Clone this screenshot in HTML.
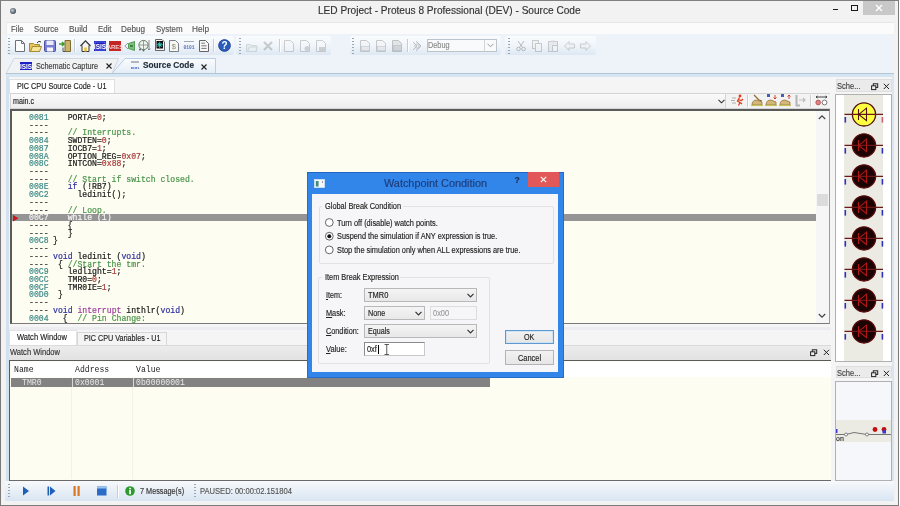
<!DOCTYPE html>
<html><head><meta charset="utf-8">
<style>
*{margin:0;padding:0;box-sizing:border-box}
html,body{width:900px;height:506px;overflow:hidden;background:#ffffff;font-family:"Liberation Sans",sans-serif}
.a{position:absolute}
.t{position:absolute;white-space:pre;line-height:1;-webkit-text-stroke:0.15px currentColor}
.m{position:absolute;white-space:pre;line-height:1;font-family:"Liberation Mono",monospace;font-size:8.15px}
svg{position:absolute;overflow:visible}
.menu{font-size:8.6px;color:#555;top:24.8px}
.grip{position:absolute;width:2px;background:repeating-linear-gradient(#9aa6b4 0 1px,transparent 1px 3px)}
.sep{position:absolute;width:1px;background:#c5cdd6;box-shadow:1px 0 #fff}
.tb{position:absolute;top:35.5px;height:19.5px;background:linear-gradient(#fafcfe,#f0f5fa 50%,#dde8f3);border-radius:2px}
</style></head><body><div style="position:absolute;left:0;top:0;width:900px;height:506px;will-change:transform">
<!-- window frame -->
<div class="a" style="left:0;top:0;width:899px;height:506px;background:#f2f2f2;border:1px solid #7a7a7a;border-top-color:#808080"></div>
<!-- app icon -->
<div class="a" style="left:9.5px;top:7.5px;width:6px;height:6px;border-radius:50%;background:radial-gradient(circle at 40% 40%,#c8ccd4,#3a4452 75%)"></div>
<div class="t" id="title" style="left:318px;top:6.2px;font-size:10.1px;color:#333">LED Project - Proteus 8 Professional (DEV) - Source Code</div>
<!-- window buttons -->
<div class="a" style="left:832.5px;top:9px;width:5.8px;height:1.4px;background:#1a1a1a"></div>
<div class="a" style="left:851px;top:5px;width:7px;height:6px;border:0.9px solid #1a1a1a;border-top-width:1.4px"></div>
<div class="a" style="left:863px;top:1px;width:32px;height:14px;background:#c8c8c8"></div>
<svg style="left:875px;top:4px" width="8" height="8"><path d="M1 1L7 7M7 1L1 7" stroke="#fff" stroke-width="1.4"/></svg>

<!-- menu/toolbar panel -->
<div class="a" style="left:5.5px;top:21.5px;width:888.5px;height:13px;background:#fbfbfb;border-top:1px solid #e6e6e6;border-left:1px solid #ececec"></div>
<div class="a" style="left:5.5px;top:34px;width:888.5px;height:39px;background:#eef3fa"></div>
<div class="t menu" id="fFile0" style="transform:scaleX(0.9019);transform-origin:0 0;left:10.5px">File</div>
<div class="t menu" id="fSource0" style="transform:scaleX(0.8996);transform-origin:0 0;left:33.5px">Source</div>
<div class="t menu" id="fBuild0" style="transform:scaleX(0.9681);transform-origin:0 0;left:68.5px">Build</div>
<div class="t menu" id="fEdit0" style="transform:scaleX(0.9114);transform-origin:0 0;left:97.5px">Edit</div>
<div class="t menu" id="fDebug0" style="transform:scaleX(0.9476);transform-origin:0 0;left:121px">Debug</div>
<div class="t menu" id="fSystem0" style="transform:scaleX(0.9248);transform-origin:0 0;left:155.5px">System</div>
<div class="t menu" id="fHelp0" style="transform:scaleX(0.9611);transform-origin:0 0;left:192px">Help</div>
<!-- toolbars -->
<div class="tb" style="left:7px;width:227px"></div>
<div class="tb" style="left:236px;width:95px"></div>
<div class="tb" style="left:350px;width:151px"></div>
<div class="tb" style="left:505px;width:91px"></div>
<div class="grip" style="left:8px;top:38px;height:16px"></div>
<div class="grip" style="left:239px;top:38px;height:16px"></div>
<div class="grip" style="left:352px;top:38px;height:16px"></div>
<div class="grip" style="left:508px;top:38px;height:16px"></div>
<div class="sep" style="left:74px;top:39px;height:13px"></div>
<div class="sep" style="left:213px;top:39px;height:13px"></div>
<div class="sep" style="left:279px;top:39px;height:13px"></div>
<div class="sep" style="left:407px;top:39px;height:13px"></div>
<!-- TB1 icons -->
<svg style="left:15px;top:40px" width="10" height="12"><path d="M0.5 0.5H6.5L9.5 3.5V11.5H0.5Z" fill="#fdfdfd" stroke="#6d7178"/><path d="M6.5 0.5V3.5H9.5" fill="none" stroke="#6d7178"/></svg>
<svg style="left:29px;top:40px" width="13" height="12"><path d="M0.5 3.5H4.5L5.5 4.5H10.5V11.5H0.5Z" fill="#e6c65c" stroke="#a58a2e"/><path d="M1.5 11.5L3.5 6.5H12.5L10.5 11.5Z" fill="#f6e49a" stroke="#a58a2e"/><path d="M8 3Q10 0 12 2" fill="none" stroke="#333" stroke-width="1"/></svg>
<svg style="left:44px;top:40px" width="12" height="12"><rect x="0.5" y="0.5" width="11" height="11" rx="1" fill="#7a7fd6" stroke="#4b4f9c"/><rect x="2.5" y="0.5" width="7" height="4.5" fill="#e9ecf8"/><rect x="3" y="7.5" width="6" height="4" fill="#f5f5fa"/></svg>
<svg style="left:59px;top:40px" width="12" height="12"><path d="M6 0.5H11.5V11.5H6Z" fill="#c9b46a" stroke="#7e6a2a"/><path d="M0 4H5M3 2L5 4L3 6" fill="none" stroke="#3f9a2e" stroke-width="1.5"/><path d="M4 7.5V11.5H6" fill="none" stroke="#555"/></svg>
<svg style="left:80px;top:40px" width="11" height="12"><path d="M0.5 6L5.5 0.8L10.5 6" fill="none" stroke="#333" stroke-width="1.2"/><path d="M2 5.5V11.5H9V5.5" fill="#fbf6e6" stroke="#333"/><rect x="4.2" y="7.5" width="2.6" height="4" fill="#e7c547"/></svg>
<svg style="left:94px;top:41px" width="12" height="10"><rect x="0" y="0" width="12" height="10" fill="#1d1fc0"/><rect x="1" y="1" width="10" height="8" fill="none" stroke="#8fa0ff" stroke-width="0.5"/><text x="6" y="7.6" font-size="6.5" font-family="Liberation Sans" font-weight="bold" fill="#fff" text-anchor="middle">ISIS</text></svg>
<svg style="left:109px;top:41px" width="12" height="10"><rect x="0" y="0" width="12" height="10" fill="#c42525"/><text x="6" y="7.6" font-size="6" font-family="Liberation Sans" font-weight="bold" fill="#f6d0d0" text-anchor="middle">ARES</text></svg>
<svg style="left:124px;top:40px" width="11" height="12"><path d="M4 3L0.8 6L4 9" fill="none" stroke="#8a9098" stroke-width="0.9"/><path d="M4.5 3.5L10.5 1.5V10.5L4.5 8.5Z" fill="#7cc07c" stroke="#3f8f3f" stroke-width="0.8"/><rect x="6" y="5.2" width="2.8" height="1.6" fill="#2f6f2f"/></svg>
<svg style="left:138px;top:39px" width="13" height="13"><circle cx="5.5" cy="6" r="4.6" fill="#eef4ee" stroke="#6a7a6a" stroke-width="1"/><path d="M5.5 1.5V10.5M1 6H10" stroke="#7a8a7a" stroke-width="0.8"/><circle cx="2" cy="10.5" r="1" fill="#5a6a5a"/><circle cx="5.5" cy="11.5" r="1" fill="#5a6a5a"/><path d="M11 1V11M9.8 9.5L11 11L12.2 9.5" stroke="#6a7a6a" stroke-width="0.8" fill="none"/></svg>
<svg style="left:155px;top:39px" width="10" height="12"><path d="M0.5 0.5H7L9.5 3V11.5H0.5Z" fill="#f4f4f4" stroke="#555" stroke-width="0.9"/><rect x="1.5" y="2" width="6.5" height="7.5" fill="#0a0a0a"/><path d="M4.7 2.8V8.8M1.8 5.8H7.7M2.7 3.8L6.7 7.8M6.7 3.8L2.7 7.8" stroke="#38e0d8" stroke-width="0.9"/></svg>
<svg style="left:169px;top:40px" width="10" height="12"><path d="M0.5 0.5H6.5L9.5 3.5V11.5H0.5Z" fill="#f7f7f4" stroke="#6d7178" stroke-width="0.9"/><text x="4.8" y="9.2" font-size="7.5" font-family="Liberation Sans" fill="#8a8a70" text-anchor="middle">$</text></svg>
<svg style="left:183px;top:40px" width="12" height="12"><rect x="1" y="1" width="10" height="0.9" fill="#9aa0a8"/><text x="6" y="9" font-size="4.6" font-family="Liberation Mono" font-weight="bold" fill="#5a70c0" text-anchor="middle">0101</text></svg>
<svg style="left:199px;top:40px" width="10" height="12"><path d="M0.5 0.5H6.5L9.5 3.5V11.5H0.5Z" fill="#f7f7f7" stroke="#555" stroke-width="0.9"/><path d="M2.3 3.2H6M2.3 5.8H7.6M2.3 8.4H7.6" stroke="#555" stroke-width="0.8"/></svg>
<svg style="left:218px;top:39px" width="13" height="13"><circle cx="6.5" cy="6.5" r="5.9" fill="#2a5cba" stroke="#1c3f8c" stroke-width="0.8"/><text x="6.6" y="10.4" font-size="10" font-family="Liberation Sans" font-weight="bold" fill="#fff" text-anchor="middle">?</text></svg>
<!-- TB2 disabled -->
<svg style="left:246px;top:41px" width="12" height="11" opacity="0.38"><path d="M0.5 3.5H4.5L5.5 4.5H10.5V10.5H0.5Z" fill="#ddd" stroke="#9aa"/><path d="M1.5 10.5L3.5 6H11.5L9.5 10.5Z" fill="#eee" stroke="#9aa"/></svg>
<svg style="left:263px;top:41px" width="10" height="10" opacity="0.4"><path d="M1 1L9 9M9 1L1 9" stroke="#8a8a8a" stroke-width="2.2"/></svg>
<svg style="left:284px;top:40px" width="10" height="12" opacity="0.38"><path d="M0.5 0.5H6.5L9.5 3.5V11.5H0.5Z" fill="#fafafa" stroke="#888"/></svg>
<svg style="left:300px;top:40px" width="11" height="12" opacity="0.38"><path d="M0.5 0.5H6.5L9.5 3.5V11.5H0.5Z" fill="#fafafa" stroke="#888"/><circle cx="7" cy="8.5" r="2.5" fill="#999"/></svg>
<svg style="left:316px;top:40px" width="11" height="12" opacity="0.38"><path d="M0.5 0.5H6.5L9.5 3.5V11.5H0.5Z" fill="#fafafa" stroke="#888"/><rect x="3" y="7" width="7" height="4" fill="#999"/></svg>
<!-- TB3 -->
<svg style="left:360px;top:40px" width="11" height="12" opacity="0.42"><path d="M0.5 0.5H6.5L9.5 3.5V11.5H0.5Z" fill="#f4f4f4" stroke="#888"/><rect x="1.5" y="6.5" width="8" height="4" fill="#ddd" stroke="#888" stroke-width="0.6"/></svg>
<svg style="left:376px;top:40px" width="11" height="12" opacity="0.42"><path d="M0.5 0.5H6.5L9.5 3.5V11.5H0.5Z" fill="#f4f4f4" stroke="#888"/><rect x="1.5" y="6.5" width="8" height="4" fill="#ddd" stroke="#888" stroke-width="0.6"/></svg>
<svg style="left:392px;top:40px" width="11" height="12" opacity="0.42"><path d="M0.5 0.5H6.5L9.5 3.5V11.5H0.5Z" fill="#ccc" stroke="#777"/><rect x="1.5" y="5.5" width="8" height="5" fill="#aaa" stroke="#777" stroke-width="0.6"/></svg>
<svg style="left:412px;top:40px" width="11" height="12" opacity="0.42"><path d="M1 2L5 6L1 10M4 1L9 6L4 11" fill="none" stroke="#777" stroke-width="1"/><circle cx="5" cy="6" r="2.2" fill="none" stroke="#777"/></svg>
<div class="a" style="left:427px;top:38.5px;width:70px;height:13px;background:#f9fafb;border:1px solid #bcc3ca"></div>
<div class="a" style="left:484px;top:39.5px;width:1px;height:11px;background:#d5d5d5"></div>
<svg style="left:487px;top:43px" width="7" height="5"><path d="M0.5 0.8L3.5 3.8L6.5 0.8" fill="none" stroke="#999" stroke-width="1"/></svg>
<div class="t" id="fDebugcombo1" style="transform:scaleX(0.8792);transform-origin:0 0;left:427.5px;top:41px;font-size:8.3px;color:#8a8a8a">Debug</div>
<!-- TB4 -->
<svg style="left:516px;top:40px" width="11" height="12" opacity="0.42"><circle cx="2.5" cy="9" r="1.8" fill="none" stroke="#666"/><circle cx="7.5" cy="9" r="1.8" fill="none" stroke="#666"/><path d="M3.5 7.5L8 1M6.5 7.5L2 1" stroke="#666"/></svg>
<svg style="left:532px;top:40px" width="11" height="12" opacity="0.4"><rect x="0.5" y="0.5" width="6" height="8" fill="#eee" stroke="#888"/><rect x="3.5" y="3.5" width="6" height="8" fill="#f4f4f4" stroke="#888"/></svg>
<svg style="left:548px;top:40px" width="11" height="12" opacity="0.4"><rect x="0.5" y="1.5" width="9" height="10" fill="#ddd" stroke="#888"/><rect x="3" y="0.5" width="4" height="2" fill="#aaa"/><rect x="4.5" y="5.5" width="5" height="6" fill="#f4f4f4" stroke="#888"/></svg>
<svg style="left:564px;top:40px" width="11" height="12" opacity="0.38"><path d="M0.5 6L5 1.5V4H10.5V8H5V10.5Z" fill="#eee" stroke="#888"/></svg>
<svg style="left:580px;top:40px" width="11" height="12" opacity="0.38"><path d="M10.5 6L6 1.5V4H0.5V8H6V10.5Z" fill="#eee" stroke="#888"/></svg>
<!-- doc tab strip -->

<svg style="left:5px;top:57px" width="220" height="18">
 <path d="M1 16.5L9 1.5H113.5L107 16.5Z" fill="#f1f2f4" stroke="#d2d8de" stroke-width="1"/>
 <path d="M107 16.5L120 1.5H210.5V16.5Z" fill="url(#g1)" stroke="#b9cfe6" stroke-width="1"/>
 <defs><linearGradient id="g1" x1="0" y1="0" x2="0" y2="1"><stop offset="0" stop-color="#fbfcfe"/><stop offset="1" stop-color="#e3edf7"/></linearGradient></defs>
</svg>
<div class="a" style="left:5.5px;top:72.5px;width:888.5px;height:4.5px;background:#d6e5f2;border-top:1px solid #b2c6d8"></div>
<svg style="left:19.5px;top:62px" width="12" height="8"><rect width="12" height="8" fill="#1b1fc4"/><text x="6" y="6.6" font-size="6.4" font-family="Liberation Sans" font-weight="bold" fill="#fff" text-anchor="middle">ISIS</text></svg>
<div class="t" id="fSchematicCapture0" style="transform:scaleX(0.8482);transform-origin:0 0;left:36px;top:61.5px;font-size:8.6px;color:#3c3c3c">Schematic Capture</div>
<svg style="left:106px;top:63px" width="6" height="6"><path d="M0.5 0.5L5.5 5.5M5.5 0.5L0.5 5.5" stroke="#222" stroke-width="1.1"/></svg>
<svg style="left:130px;top:61px" width="10" height="9"><rect x="1" y="0.5" width="8" height="1" fill="#6c7480"/><text x="5" y="7.5" font-size="3.6" font-family="Liberation Mono" font-weight="bold" fill="#3a55b5" text-anchor="middle">0101</text></svg>
<div class="t" id="fSourceCode0" style="transform:scaleX(0.9398);transform-origin:0 0;left:143px;top:61px;font-size:8.8px;color:#1e2a36;font-weight:bold">Source Code</div>
<svg style="left:201px;top:63.5px" width="6" height="6"><path d="M0.5 0.5L5.5 5.5M5.5 0.5L0.5 5.5" stroke="#222" stroke-width="1.1"/></svg>

<!-- source pane -->
<div class="a" style="left:5px;top:77px;width:829px;height:250px;background:#f5f5f5"></div>
<div class="a" style="left:8.5px;top:78.5px;width:106px;height:15px;background:#fff;border:1px solid #e0e0e0;border-bottom:none"></div>
<div class="t" id="fPICCPUSourceCodeU10" style="transform:scaleX(0.8742);transform-origin:0 0;left:16.5px;top:81.5px;font-size:8.3px;color:#222">PIC CPU Source Code - U1</div>
<div class="a" style="left:10px;top:93px;width:716px;height:16px;background:linear-gradient(#fafafa,#ededed);border:1px solid #d4d4d4"></div>
<div class="t" id="fmainc0" style="transform:scaleX(0.8593);transform-origin:0 0;left:13px;top:97px;font-size:8.3px;color:#222">main.c</div>
<svg style="left:718px;top:99px" width="7" height="5"><path d="M0.5 0.8L3.5 3.8L6.5 0.8" fill="none" stroke="#333" stroke-width="1.1"/></svg>
<div class="a" style="left:726px;top:93px;width:104px;height:16px;background:#f3f3f3;border-top:1px solid #d4d4d4;border-bottom:1px solid #d4d4d4"></div>
<!-- pane icons -->
<svg style="left:731px;top:94px" width="13" height="12"><path d="M1 4H5M0 6.5H4M1 9H5" stroke="#999" stroke-width="0.8"/><circle cx="9" cy="2" r="1.4" fill="#e23a1a"/><path d="M8.5 3.5L6.5 7L9 8.5L7.5 11.5M7 5.5L10.5 6.5L12 5M8.5 8L11 10" stroke="#e23a1a" stroke-width="1.3" fill="none"/></svg>
<div class="sep" style="left:747px;top:95px;height:12px;background:#ccc"></div>
<svg style="left:751px;top:94px" width="13" height="12"><path d="M3 1L8 6L11 7" stroke="#8a6a30" stroke-width="1.2" fill="none"/><path d="M1 11Q1 6 6 6L11 8V11Z" fill="#d5b77a" stroke="#8a6a30" stroke-width="0.7"/><path d="M0 11.5H12" stroke="#c8c45a" stroke-width="1.2"/></svg>
<svg style="left:765px;top:94px" width="13" height="12"><rect x="2" y="0" width="3" height="3" fill="#4a5ab0"/><path d="M1 11Q1 6 6 6L11 8V11Z" fill="#d5b77a" stroke="#8a6a30" stroke-width="0.7"/><path d="M0 11.5H12" stroke="#c8c45a" stroke-width="1.2"/><path d="M10 1V5M8.5 3.5L10 5L11.5 3.5" stroke="#d03020" stroke-width="0.9" fill="none"/></svg>
<svg style="left:779px;top:94px" width="13" height="12"><rect x="2" y="0" width="3" height="3" fill="#4a5ab0"/><path d="M1 11Q1 6 6 6L11 8V11Z" fill="#d5b77a" stroke="#8a6a30" stroke-width="0.7"/><path d="M0 11.5H12" stroke="#c8c45a" stroke-width="1.2"/><path d="M10 5V1M8.5 2.5L10 1L11.5 2.5" stroke="#d03020" stroke-width="0.9" fill="none"/></svg>
<svg style="left:795px;top:94px" width="12" height="12" opacity="0.5"><path d="M1.5 1V11.5H5" stroke="#777" stroke-width="2" fill="none"/><path d="M4 6H10M8 4L10 6L8 8" stroke="#888" stroke-width="1.2" fill="none"/></svg>
<div class="sep" style="left:810px;top:95px;height:12px;background:#ccc"></div>
<svg style="left:815px;top:95px" width="13" height="11"><path d="M1 2H12M1 2L2.5 1M12 2L10.5 1M1 2L2.5 3M12 2L10.5 3" stroke="#333" stroke-width="0.9"/><circle cx="3.2" cy="7.5" r="2.4" fill="#e08080" stroke="#a03030" stroke-width="0.6"/><circle cx="9.5" cy="7.5" r="2.4" fill="#fff" stroke="#444" stroke-width="0.7"/></svg>
<!-- editor -->
<style>.m2{position:absolute;white-space:pre;line-height:1;font-family:"Liberation Mono",monospace;font-size:16.3px;color:#1a1a1a;-webkit-text-stroke:0.4px currentColor}.ca{color:#3d8a8a}.cd{color:#3a3a3a}.cn{color:#a83a3a}.cc{color:#4a944a}.ck{color:#3030a0}.cp{color:#a040a0}</style>
<div class="a" style="left:10px;top:109px;width:820px;height:215px;background:#fdfdf1;border-left:2px solid #5a5a5a;border-top:2px solid #5a5a5a;border-right:1px solid #9a9a9a;border-bottom:1px solid #7a7a7a"></div>
<div class="a" style="left:12px;top:214.19px;width:803.5px;height:7px;background:#959595"></div>
<svg style="left:13px;top:214.90px" width="6" height="7"><path d="M0 0L5.5 3.3L0 6.6Z" fill="#c81818"/></svg>
<div class="a" style="left:0;top:100px;width:1800px;height:600px;transform:scale(0.5);transform-origin:0 0"><div class="m2 ca" style="left:58.00px;top:27.60px">0081</div>
<div class="m2" style="left:106.00px;top:27.60px">   PORTA=<span class="cn">0</span>;</div>
<div class="m2 cd" style="left:58.00px;top:43.03px">----</div>
<div class="m2 cd" style="left:58.00px;top:58.46px">----</div>
<div class="m2" style="left:106.00px;top:58.46px">   <span class="cc">// Interrupts.</span></div>
<div class="m2 ca" style="left:58.00px;top:73.89px">0084</div>
<div class="m2" style="left:106.00px;top:73.89px">   SWDTEN=<span class="cn">0</span>;</div>
<div class="m2 ca" style="left:58.00px;top:89.32px">0087</div>
<div class="m2" style="left:106.00px;top:89.32px">   IOCB7=<span class="cn">1</span>;</div>
<div class="m2 ca" style="left:58.00px;top:104.75px">008A</div>
<div class="m2" style="left:106.00px;top:104.75px">   OPTION_REG=<span class="cn">0x07</span>;</div>
<div class="m2 ca" style="left:58.00px;top:120.18px">008C</div>
<div class="m2" style="left:106.00px;top:120.18px">   INTCON=<span class="cn">0x88</span>;</div>
<div class="m2 cd" style="left:58.00px;top:135.61px">----</div>
<div class="m2 cd" style="left:58.00px;top:151.04px">----</div>
<div class="m2" style="left:106.00px;top:151.04px">   <span class="cc">// Start if switch closed.</span></div>
<div class="m2 ca" style="left:58.00px;top:166.47px">008E</div>
<div class="m2" style="left:106.00px;top:166.47px">   <span class="ck">if</span> (!RB7)</div>
<div class="m2 ca" style="left:58.00px;top:181.90px">00C2</div>
<div class="m2" style="left:106.00px;top:181.90px">     ledinit();</div>
<div class="m2 cd" style="left:58.00px;top:197.33px">----</div>
<div class="m2 cd" style="left:58.00px;top:212.76px">----</div>
<div class="m2" style="left:106.00px;top:212.76px">   <span class="cc">// Loop.</span></div>
<div class="m2" style="left:58.00px;top:228.19px;color:#f0f0f0">00C7</div>
<div class="m2" style="left:106.00px;top:228.19px;color:#f4f4f4">   while (1)</div>
<div class="m2 cd" style="left:58.00px;top:243.62px">----</div>
<div class="m2" style="left:106.00px;top:243.62px">   {</div>
<div class="m2 cd" style="left:58.00px;top:259.05px">----</div>
<div class="m2" style="left:106.00px;top:259.05px">   }</div>
<div class="m2 ca" style="left:58.00px;top:274.48px">00C8</div>
<div class="m2" style="left:106.00px;top:274.48px">}</div>
<div class="m2 cd" style="left:58.00px;top:289.91px">----</div>
<div class="m2 cd" style="left:58.00px;top:305.34px">----</div>
<div class="m2" style="left:106.00px;top:305.34px"><span class="ck">void</span> ledinit (<span class="ck">void</span>)</div>
<div class="m2 cd" style="left:58.00px;top:320.77px">----</div>
<div class="m2" style="left:106.00px;top:320.77px"> { <span class="cc">//Start the tmr.</span></div>
<div class="m2 ca" style="left:58.00px;top:336.20px">00C9</div>
<div class="m2" style="left:106.00px;top:336.20px">   ledlight=<span class="cn">1</span>;</div>
<div class="m2 ca" style="left:58.00px;top:351.63px">00CC</div>
<div class="m2" style="left:106.00px;top:351.63px">   TMR0=<span class="cn">0</span>;</div>
<div class="m2 ca" style="left:58.00px;top:367.06px">00CF</div>
<div class="m2" style="left:106.00px;top:367.06px">   TMR0IE=<span class="cn">1</span>;</div>
<div class="m2 ca" style="left:58.00px;top:382.49px">00D0</div>
<div class="m2" style="left:106.00px;top:382.49px"> }</div>
<div class="m2 cd" style="left:58.00px;top:397.92px">----</div>
<div class="m2 cd" style="left:58.00px;top:413.35px">----</div>
<div class="m2" style="left:106.00px;top:413.35px"><span class="ck">void</span> <span class="cp">interrupt</span> inthlr(<span class="ck">void</span>)</div>
<div class="m2 ca" style="left:58.00px;top:428.78px">0004</div>
<div class="m2" style="left:106.00px;top:428.78px">  {  <span class="cc">// Pin Change:</span></div></div>
<!-- editor scrollbar -->
<div class="a" style="left:816px;top:111px;width:13px;height:212px;background:#f6f6f6"></div>
<svg style="left:818px;top:115px" width="8" height="5"><path d="M0.8 4L4 0.8L7.2 4" fill="none" stroke="#444" stroke-width="1.2"/></svg>
<svg style="left:818px;top:313px" width="8" height="5"><path d="M0.8 1L4 4.2L7.2 1" fill="none" stroke="#444" stroke-width="1.2"/></svg>
<div class="a" style="left:816.5px;top:194px;width:11px;height:12px;background:#dcdcdc"></div>

<!-- splitter -->
<div class="a" style="left:8px;top:326.5px;width:826px;height:3px;background:#ebedf0"></div>

<!-- watch pane -->
<div class="a" style="left:8px;top:329.5px;width:826px;height:152px;background:#f5f5f5"></div>
<div class="a" style="left:8.5px;top:330px;width:68px;height:15px;background:#fff;border:1px solid #e2e2e2;border-bottom:none"></div>
<div class="t" id="fWatchWindowtab0" style="transform:scaleX(0.9086);transform-origin:0 0;left:17px;top:333px;font-size:8.3px;color:#222">Watch Window</div>
<div class="a" style="left:77px;top:332px;width:90px;height:13px;background:#f4f4f4;border:1px solid #d6d6d6;border-bottom:none"></div>
<div class="t" id="fPICCPUVariablesU10" style="transform:scaleX(0.8690);transform-origin:0 0;left:83.6px;top:334px;font-size:8.3px;color:#222">PIC CPU Variables - U1</div>
<div class="a" style="left:8.5px;top:344.5px;width:824px;height:15.5px;background:linear-gradient(#ececec,#e2e2e2);border-top:1px solid #dadada"></div>
<div class="t" id="fWatchWindowbar1" style="transform:scaleX(0.9086);transform-origin:0 0;left:10px;top:348px;font-size:8.3px;color:#333">Watch Window</div>
<svg style="left:810px;top:348.5px" width="8" height="8"><rect x="2.3" y="0.8" width="4.4" height="3.6" fill="none" stroke="#222" stroke-width="1"/><rect x="0.6" y="2.8" width="4.2" height="3.8" fill="#eee" stroke="#222" stroke-width="1"/></svg>
<svg style="left:823px;top:349px" width="7" height="7"><path d="M0.8 0.8L6 6M6 0.8L0.8 6" stroke="#222" stroke-width="1"/></svg>
<div class="a" style="left:9px;top:360px;width:823px;height:121px;background:#fdfdf1;border-left:1.5px solid #5a5a5a;border-top:1.5px solid #5a5a5a;border-right:1px solid #8a8a8a;border-bottom:1.5px solid #6a6a6a"></div>
<div class="a" style="left:11px;top:362px;width:820px;height:15px;background:#fff"></div>
<div class="m" style="left:14px;top:366px;color:#222">Name</div>
<div class="m" style="left:75px;top:366px;color:#222">Address</div>
<div class="m" style="left:136px;top:366px;color:#222">Value</div>
<div class="a" style="left:71px;top:377px;width:1px;height:102px;background:#f2f2e6"></div>
<div class="a" style="left:132px;top:377px;width:1px;height:102px;background:#f2f2e6"></div>
<div class="a" style="left:11px;top:378px;width:479px;height:9px;background:#828282"></div>
<div class="a" style="left:71.5px;top:378px;width:1px;height:9px;background:#d8d8d8"></div>
<div class="a" style="left:132.5px;top:378px;width:1px;height:9px;background:#d8d8d8"></div>
<div class="m" style="left:22px;top:379px;color:#e8e8e8">TMR0</div>
<div class="m" style="left:75px;top:379px;color:#e8e8e8">0x0001</div>
<div class="m" style="left:136px;top:379px;color:#e8e8e8">0b00000001</div>

<!-- right panels -->
<div class="a" style="left:831px;top:77px;width:63px;height:404px;background:#f5f5f5"></div>
<div class="a" style="left:892px;top:77px;width:2px;height:404px;background:#d9e6f2"></div>
<div class="a" style="left:835.5px;top:79px;width:56px;height:12.5px;background:#ebebeb;border:1px solid #dedede"></div>
<div class="t" id="fSche10" style="transform:scaleX(0.9099);transform-origin:0 0;left:836.5px;top:82px;font-size:8.3px;color:#444">Sche...</div>
<svg style="left:871px;top:82.5px" width="8" height="8"><rect x="2.3" y="0.8" width="4.4" height="3.6" fill="none" stroke="#222" stroke-width="1"/><rect x="0.6" y="2.8" width="4.2" height="3.8" fill="#eee" stroke="#222" stroke-width="1"/></svg>
<svg style="left:883px;top:83px" width="7" height="7"><path d="M0.8 0.8L6 6M6 0.8L0.8 6" stroke="#222" stroke-width="1"/></svg>
<div class="a" style="left:835px;top:93.5px;width:57px;height:268px;background:#fff;border:1px solid #b0b0b0"></div>
<div class="a" style="left:844px;top:94.5px;width:39px;height:266px;background:#ecebe3"></div>
<div class="a" style="left:835.5px;top:366px;width:56px;height:12px;background:#ebebeb;border:1px solid #dedede"></div>
<div class="t" id="fSche21" style="transform:scaleX(0.9099);transform-origin:0 0;left:836.5px;top:369px;font-size:8.3px;color:#444">Sche...</div>
<svg style="left:871px;top:369.5px" width="8" height="8"><rect x="2.3" y="0.8" width="4.4" height="3.6" fill="none" stroke="#222" stroke-width="1"/><rect x="0.6" y="2.8" width="4.2" height="3.8" fill="#eee" stroke="#222" stroke-width="1"/></svg>
<svg style="left:883px;top:370px" width="7" height="7"><path d="M0.8 0.8L6 6M6 0.8L0.8 6" stroke="#222" stroke-width="1"/></svg>
<div class="a" style="left:835px;top:380.5px;width:57px;height:100px;background:#f6f7fa;border:1px solid #b0b0b0"></div>

<svg style="left:844px;top:95px" width="40" height="266">
<circle cx="20" cy="19.4" r="11.6" fill="#ffff40" stroke="#501010" stroke-width="1.3"/>
<path d="M0.5 19.4H39" stroke="#6a1818" stroke-width="1.2"/>
<path d="M14.5 13.9V24.9M22.5 13.1L14.8 19.4L22.5 25.7Z" fill="none" stroke="#501010" stroke-width="1.1"/>
<rect x="0.5" y="22.0" width="1.6" height="5.6" fill="#3030c0"/>
<rect x="37.6" y="22.0" width="1.6" height="5.6" fill="#d06070"/>
<circle cx="20" cy="50.4" r="11.6" fill="#1c0303" stroke="#5a0a0a" stroke-width="1.3"/>
<path d="M0.5 50.4H39" stroke="#6a1818" stroke-width="1.2"/>
<path d="M14.5 44.9V55.9M22.5 44.1L14.8 50.4L22.5 56.7Z" fill="none" stroke="#b01818" stroke-width="1.1"/>
<rect x="0.5" y="53.0" width="1.6" height="5.6" fill="#3030c0"/>
<rect x="37.6" y="53.0" width="1.6" height="5.6" fill="#3030c0"/>
<circle cx="20" cy="81.4" r="11.6" fill="#1c0303" stroke="#5a0a0a" stroke-width="1.3"/>
<path d="M0.5 81.4H39" stroke="#6a1818" stroke-width="1.2"/>
<path d="M14.5 75.9V86.9M22.5 75.1L14.8 81.4L22.5 87.7Z" fill="none" stroke="#b01818" stroke-width="1.1"/>
<rect x="0.5" y="84.0" width="1.6" height="5.6" fill="#3030c0"/>
<rect x="37.6" y="84.0" width="1.6" height="5.6" fill="#3030c0"/>
<circle cx="20" cy="112.4" r="11.6" fill="#1c0303" stroke="#5a0a0a" stroke-width="1.3"/>
<path d="M0.5 112.4H39" stroke="#6a1818" stroke-width="1.2"/>
<path d="M14.5 106.9V117.9M22.5 106.1L14.8 112.4L22.5 118.7Z" fill="none" stroke="#b01818" stroke-width="1.1"/>
<rect x="0.5" y="115.0" width="1.6" height="5.6" fill="#3030c0"/>
<rect x="37.6" y="115.0" width="1.6" height="5.6" fill="#3030c0"/>
<circle cx="20" cy="143.4" r="11.6" fill="#1c0303" stroke="#5a0a0a" stroke-width="1.3"/>
<path d="M0.5 143.4H39" stroke="#6a1818" stroke-width="1.2"/>
<path d="M14.5 137.9V148.9M22.5 137.1L14.8 143.4L22.5 149.7Z" fill="none" stroke="#b01818" stroke-width="1.1"/>
<rect x="0.5" y="146.0" width="1.6" height="5.6" fill="#3030c0"/>
<rect x="37.6" y="146.0" width="1.6" height="5.6" fill="#3030c0"/>
<circle cx="20" cy="174.4" r="11.6" fill="#1c0303" stroke="#5a0a0a" stroke-width="1.3"/>
<path d="M0.5 174.4H39" stroke="#6a1818" stroke-width="1.2"/>
<path d="M14.5 168.9V179.9M22.5 168.1L14.8 174.4L22.5 180.7Z" fill="none" stroke="#b01818" stroke-width="1.1"/>
<rect x="0.5" y="177.0" width="1.6" height="5.6" fill="#3030c0"/>
<rect x="37.6" y="177.0" width="1.6" height="5.6" fill="#3030c0"/>
<circle cx="20" cy="205.4" r="11.6" fill="#1c0303" stroke="#5a0a0a" stroke-width="1.3"/>
<path d="M0.5 205.4H39" stroke="#6a1818" stroke-width="1.2"/>
<path d="M14.5 199.9V210.9M22.5 199.1L14.8 205.4L22.5 211.7Z" fill="none" stroke="#b01818" stroke-width="1.1"/>
<rect x="0.5" y="208.0" width="1.6" height="5.6" fill="#3030c0"/>
<rect x="37.6" y="208.0" width="1.6" height="5.6" fill="#3030c0"/>
<circle cx="20" cy="236.4" r="11.6" fill="#1c0303" stroke="#5a0a0a" stroke-width="1.3"/>
<path d="M0.5 236.4H39" stroke="#6a1818" stroke-width="1.2"/>
<path d="M14.5 230.9V241.9M22.5 230.1L14.8 236.4L22.5 242.7Z" fill="none" stroke="#b01818" stroke-width="1.1"/>
<rect x="0.5" y="239.0" width="1.6" height="5.6" fill="#3030c0"/>
<rect x="37.6" y="239.0" width="1.6" height="5.6" fill="#3030c0"/>
</svg>

<!-- panel 2 schematic snippet -->
<div class="a" style="left:836px;top:419.5px;width:55px;height:22.5px;background:#ecebe3"></div>
<svg style="left:836px;top:422px" width="55" height="25">
<path d="M0 12.5H10L18 10.5L31 12.5H55" fill="none" stroke="#555" stroke-width="0.8"/>
<circle cx="10" cy="12.5" r="1.5" fill="#fff" stroke="#555" stroke-width="0.7"/>
<circle cx="31" cy="12.5" r="1.5" fill="#fff" stroke="#555" stroke-width="0.7"/>
<circle cx="39" cy="7.5" r="2.4" fill="#c01010"/><circle cx="48" cy="7.5" r="2.4" fill="#c01010"/>
<rect x="46.5" y="8" width="3.5" height="3.5" fill="#3a3ad0"/>
<rect x="0" y="7" width="1.5" height="4" fill="#3a3ad0"/>
</svg>
<div class="t" style="left:836px;top:435px;font-size:7px;color:#333">on</div>

<div class="a" style="left:5.5px;top:77px;width:3px;height:404px;background:#d3e1ee"></div>
<!-- status bar -->
<div class="a" style="left:5px;top:481px;width:889px;height:20px;background:linear-gradient(#f7f9fc,#e8eff7 50%,#d8e5f2)"></div>
<div class="grip" style="left:8px;top:484px;height:15px"></div>
<svg style="left:22px;top:486px" width="8" height="10"><path d="M1 0.5L7 5L1 9.5Z" fill="#1e5fb8"/></svg>
<svg style="left:47px;top:486px" width="9" height="10"><rect x="0.5" y="0.5" width="1.6" height="9" fill="#1e5fb8"/><path d="M3 0.5L8.5 5L3 9.5Z" fill="#1e5fb8"/></svg>
<svg style="left:73px;top:486px" width="8" height="10"><rect x="0.5" y="0" width="2.2" height="10" fill="#d87822"/><rect x="4.5" y="0" width="2.2" height="10" fill="#d87822"/></svg>
<svg style="left:97px;top:486px" width="10" height="10"><rect x="0" y="0.5" width="9.5" height="9" fill="#2a6cc8"/><rect x="0" y="0.5" width="9.5" height="2" fill="#9cc4f0"/></svg>
<div class="sep" style="left:117px;top:485px;height:13px"></div>
<svg style="left:125px;top:485.5px" width="10" height="10"><circle cx="5" cy="5" r="4.8" fill="#2e9a2e"/><rect x="4.2" y="4" width="1.7" height="4.2" fill="#fff"/><rect x="4.2" y="1.8" width="1.7" height="1.5" fill="#fff"/></svg>
<div class="t" id="f7Messages0" style="transform:scaleX(0.8773);transform-origin:0 0;left:139.7px;top:487px;font-size:8.3px;color:#333">7 Message(s)</div>
<div class="grip" style="left:193.5px;top:484px;height:15px"></div>
<div class="t" id="fPAUSED0000021518040" style="transform:scaleX(0.9153);transform-origin:0 0;left:199.6px;top:487px;font-size:8.3px;color:#555">PAUSED: 00:00:02.151804</div>
<!-- dialog -->
<style>.dl{font-size:8.3px;color:#222}.u{text-decoration:underline;text-underline-offset:0.5px;text-decoration-thickness:0.6px}</style>
<div class="a" style="left:306.5px;top:172px;width:257px;height:205.5px;background:#3286ea;border:1px solid #2a6cc4;border-top-color:#2466c0"></div>
<svg style="left:313.5px;top:178.5px" width="11" height="9"><rect x="0.5" y="0.5" width="10" height="8" fill="#f4f8fc" stroke="#d8e4f0" stroke-width="0.8"/><rect x="1.8" y="2" width="2.8" height="5.5" fill="#4a8a7a"/><rect x="8" y="2" width="0.8" height="2" fill="#888"/></svg>
<div class="t" id="fWatchpointCondition0" style="transform:scaleX(1.0564);transform-origin:0 0;left:384px;top:178.8px;font-size:10.3px;color:#1e3c78">Watchpoint Condition</div>
<div class="t" style="left:514.5px;top:175.5px;font-size:8.5px;color:#1e2c4c;font-weight:bold">?</div>
<div class="a" style="left:527.5px;top:172px;width:31px;height:14.5px;background:#e25858"></div>
<svg style="left:539.5px;top:175.5px" width="7" height="7"><path d="M0.8 0.8L6.2 6.2M6.2 0.8L0.8 6.2" stroke="#fff" stroke-width="1.1"/></svg>
<div class="a" style="left:312px;top:194px;width:246px;height:178px;background:#f6f6f8"></div>
<!-- group 1 -->
<div class="a" style="left:318.5px;top:205.5px;width:235px;height:58px;border:1px solid #e2e2e4;border-radius:2px"></div>
<div class="a" style="left:322px;top:201px;width:81px;height:9px;background:#f6f6f8"></div>
<div class="t dl" id="fGlobalBreakCondition0" style="transform:scaleX(0.8907);transform-origin:0 0;left:324.5px;top:202px">Global Break Condition</div>
<svg style="left:325px;top:218px" width="9" height="37">
 <circle cx="4.3" cy="4.5" r="3.9" fill="#fff" stroke="#555" stroke-width="0.9"/>
 <circle cx="4.3" cy="18.2" r="3.9" fill="#fff" stroke="#555" stroke-width="0.9"/>
 <circle cx="4.3" cy="18.2" r="2" fill="#111"/>
 <circle cx="4.3" cy="31.9" r="3.9" fill="#fff" stroke="#555" stroke-width="0.9"/>
</svg>
<div class="t dl" id="fTurnoffdisablewatchpoints0" style="transform:scaleX(0.8922);transform-origin:0 0;left:336.5px;top:218.5px">Turn off (disable) watch points.</div>
<div class="t dl" id="fSuspendthesimulationifANYexpressionistrue0" style="transform:scaleX(0.8846);transform-origin:0 0;left:336.5px;top:232px">Suspend the simulation if ANY expression is true.</div>
<div class="t dl" id="fStopthesimulationonlywhenALLexpressionsaretrue0" style="transform:scaleX(0.8894);transform-origin:0 0;left:336.5px;top:246px">Stop the simulation only when ALL expressions are true.</div>
<!-- group 2 -->
<div class="a" style="left:318px;top:277px;width:172px;height:87px;border:1px solid #e2e2e4;border-radius:2px"></div>
<div class="a" style="left:322px;top:272px;width:78px;height:9px;background:#f6f6f8"></div>
<div class="t dl" id="fItemBreakExpression0" style="transform:scaleX(0.8842);transform-origin:0 0;left:324.5px;top:273px">Item Break Expression</div>
<div class="t dl" id="fItem0" style="transform:scaleX(0.8616);transform-origin:0 0;left:325.5px;top:291px"><span class="u">I</span>tem:</div>
<div class="t dl" id="fMask0" style="transform:scaleX(0.8807);transform-origin:0 0;left:325.5px;top:309px"><span class="u">M</span>ask:</div>
<div class="t dl" id="fCondition0" style="transform:scaleX(0.8776);transform-origin:0 0;left:325.5px;top:327px"><span class="u">C</span>ondition:</div>
<div class="t dl" id="fValue0" style="transform:scaleX(0.9074);transform-origin:0 0;left:325.5px;top:345px"><span class="u">V</span>alue:</div>
<div class="a" style="left:364px;top:288px;width:113px;height:14px;background:linear-gradient(#f4f4f4,#e8e8e8);border:1px solid #b8b8b8"></div>
<div class="t dl" id="fTMR0d0" style="transform:scaleX(0.8985);transform-origin:0 0;left:367.7px;top:291px">TMR0</div>
<svg style="left:467px;top:293px" width="7" height="5"><path d="M0.5 0.8L3.5 3.8L6.5 0.8" fill="none" stroke="#333" stroke-width="1.2"/></svg>
<div class="a" style="left:364px;top:306px;width:61px;height:14px;background:linear-gradient(#f4f4f4,#e8e8e8);border:1px solid #b8b8b8"></div>
<div class="t dl" id="fNone0" style="transform:scaleX(0.8718);transform-origin:0 0;left:367.7px;top:309px">None</div>
<svg style="left:415px;top:311px" width="7" height="5"><path d="M0.5 0.8L3.5 3.8L6.5 0.8" fill="none" stroke="#333" stroke-width="1.2"/></svg>
<div class="a" style="left:429.5px;top:306px;width:47.5px;height:14px;background:#f6f6f8;border:1px solid #dcdcdc"></div>
<div class="t dl" id="f0x000" style="transform:scaleX(0.8944);transform-origin:0 0;left:432.9px;top:309px;color:#9a9a9a">0x00</div>
<div class="a" style="left:364px;top:324px;width:113px;height:14px;background:linear-gradient(#f4f4f4,#e8e8e8);border:1px solid #b8b8b8"></div>
<div class="t dl" id="fEquals0" style="transform:scaleX(0.8591);transform-origin:0 0;left:367.7px;top:327px">Equals</div>
<svg style="left:467px;top:329px" width="7" height="5"><path d="M0.5 0.8L3.5 3.8L6.5 0.8" fill="none" stroke="#333" stroke-width="1.2"/></svg>
<div class="a" style="left:364px;top:342px;width:61px;height:14px;background:#fff;border:1px solid #7a7a7a;border-color:#8a8a8a #c8c8c8 #c8c8c8 #8a8a8a"></div>
<div class="t dl" id="f0xf0" style="transform:scaleX(0.8846);transform-origin:0 0;left:367px;top:345px">0xf</div>
<div class="a" style="left:377.5px;top:344.5px;width:1px;height:9px;background:#000"></div>
<svg style="left:383.5px;top:344px" width="6" height="11"><path d="M0.5 0.5H5M2.75 0.5V10.5M0.5 10.5H5" stroke="#333" stroke-width="0.8" fill="none"/></svg>
<!-- buttons -->
<div class="a" style="left:505px;top:329.5px;width:48.5px;height:14.5px;background:linear-gradient(#f2f2f2,#e6e6e6);border:1px solid #5e9ad0;box-shadow:inset 0 0 0 1px #cfe3f5"></div>
<div class="t dl" id="fOK0" style="transform:scaleX(0.8667);transform-origin:0 0;left:524px;top:333px">OK</div>
<div class="a" style="left:505px;top:350px;width:48.5px;height:15px;background:linear-gradient(#f2f2f2,#e6e6e6);border:1px solid #b4b4b4"></div>
<div class="t dl" id="fCancel0" style="transform:scaleX(0.8944);transform-origin:0 0;left:517.7px;top:353.5px">Cancel</div>
</div></body></html>
